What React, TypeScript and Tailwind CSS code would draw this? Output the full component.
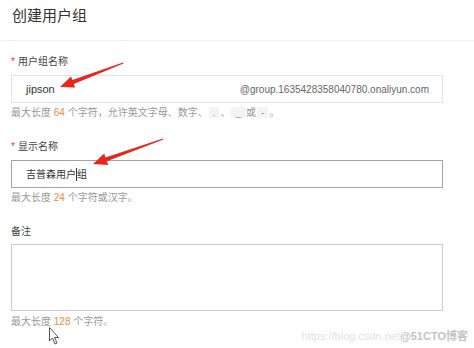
export default function App() {
  return (
    <div className="relative w-[474px] h-[348px] overflow-hidden bg-white font-['Liberation_Sans','Noto_Sans_CJK_SC',sans-serif] text-[#333]">
      <div className="h-[41px] border-b border-[#eeeeee] pl-[12px] pt-[5px]">
        <h1 className="text-[15px] leading-[22px] text-[#333]">创建用户组</h1>
      </div>

      <div className="px-[11px]">
        <div className="mt-[13px] text-[10px] leading-[16px] text-[#444]">
          <span className="text-[#e4393c] mr-[3px]">*</span>用户组名称
        </div>
        <div className="mt-[5px] w-[432px] h-[28px] border border-[#e3e3e3] flex items-center justify-between pl-[14px] pr-[13px]">
          <span className="text-[11px] text-[#333]">jipson</span>
          <span className="text-[10px] text-[#666]">@group.1635428358040780.onaliyun.com</span>
        </div>
        <div className="mt-[1px] text-[10px] leading-[18px] text-[#999]">
          最大长度 <span className="text-[#f08a3c]">64</span> 个字符，允许英文字母、数字、
          <span className="bg-[#f3f3f3] px-[4px] mx-[1px]">.</span>、
          <span className="bg-[#f3f3f3] px-[4px] mx-[1px]">_</span>或
          <span className="bg-[#f3f3f3] px-[4px] mx-[1px]">-</span>。
        </div>

        <div className="mt-[17px] text-[10px] leading-[16px] text-[#444]">
          <span className="text-[#e4393c] mr-[3px]">*</span>显示名称
        </div>
        <div className="mt-[5px] w-[432px] h-[28px] border border-[#a3a3a3] flex items-center pl-[14px] text-[10px] text-[#333]">
          吉普森用户<span className="inline-block w-[1px] h-[13px] bg-[#333]"></span>组
        </div>
        <div className="mt-[1px] text-[10px] leading-[18px] text-[#999]">
          最大长度 <span className="text-[#f08a3c]">24</span> 个字符或汉字。
        </div>

        <div className="mt-[17px] text-[10px] leading-[16px] text-[#444]">备注</div>
        <div className="mt-[4px] w-[432px] h-[67px] border border-[#cccccc]"></div>
        <div className="mt-[2px] text-[10px] leading-[18px] text-[#999]">
          最大长度 <span className="text-[#f08a3c]">128</span> 个字符。
        </div>
      </div>

      {/* annotation arrows */}
      <svg className="absolute left-0 top-0 pointer-events-none" width="474" height="348">
        <polygon
          points="123,62.5 72.4,80.1 71,76.4 60,87 75.2,87.6 73.8,83.9 123.4,63.6"
          fill="#e8261e"
        />
        <polygon
          points="163,138.5 105.5,157.4 104.2,153.6 93,164 108.2,164.9 106.9,161.2 163.4,139.6"
          fill="#e8261e"
        />
        {/* mouse pointer */}
        <path
          d="M49.5 327.5 L49.5 341 L52.5 338 L55 344 L57 343 L54.5 337.5 L58.5 337.5 Z"
          fill="#fff"
          stroke="#555"
          strokeWidth="1"
        />
      </svg>

      <div className="absolute right-[6px] bottom-[4px] text-[11px] leading-[16px]">
        <span className="text-[#e2e2e2]">https://blog.csdn.net</span>
        <span className="text-[#c4c4c4] font-bold">@51CTO博客</span>
      </div>
    </div>
  );
}
